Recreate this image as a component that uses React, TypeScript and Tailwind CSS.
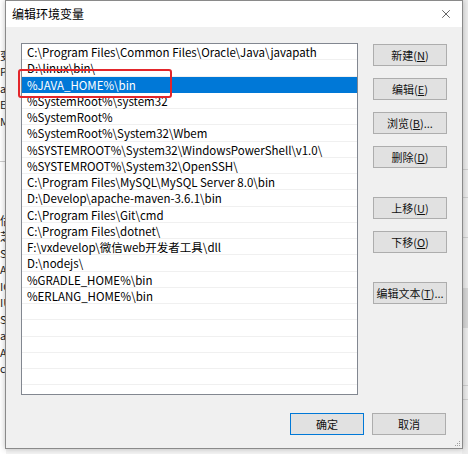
import { X } from "lucide-react";

const paths = [
  "C:\\Program Files\\Common Files\\Oracle\\Java\\javapath",
  "D:\\linux\\bin\\",
  "%JAVA_HOME%\\bin",
  "%SystemRoot%\\system32",
  "%SystemRoot%",
  "%SystemRoot%\\System32\\Wbem",
  "%SYSTEMROOT%\\System32\\WindowsPowerShell\\v1.0\\",
  "%SYSTEMROOT%\\System32\\OpenSSH\\",
  "C:\\Program Files\\MySQL\\MySQL Server 8.0\\bin",
  "D:\\Develop\\apache-maven-3.6.1\\bin",
  "C:\\Program Files\\Git\\cmd",
  "C:\\Program Files\\dotnet\\",
  "F:\\vxdevelop\\微信web开发者工具\\dll",
  "D:\\nodejs\\",
  "%GRADLE_HOME%\\bin",
  "%ERLANG_HOME%\\bin",
];

const rows = [...paths, ...Array(6).fill("")];

const sideBits = ["", "变", "Pr", "a", "E", "M", "", "", "", "", "", "估", "芝", "SF", "A", "IC", "IU", "S", "a", "A", "c"];

function Btn({ label, keyChar, tail = "", primary = false }: { label: string; keyChar?: string; tail?: string; primary?: boolean }) {
  return (
    <button
      className={`w-[74px] h-[22px] bg-[#e1e1e1] text-[11px] text-[#111] flex items-center justify-center border ${
        primary ? "border-[#0078d7]" : "border-[#adadad]"
      }`}
    >
      {label}
      {keyChar && (
        <>
          (<span className="underline">{keyChar}</span>)
        </>
      )}
      {tail}
    </button>
  );
}

export default function App() {
  return (
    <div
      className="relative w-[468px] h-[454px] overflow-hidden bg-[#f4f4f4] flex"
      style={{ fontFamily: '"Noto Sans CJK SC", "Noto Sans", sans-serif' }}
    >
      {/* background window peeking out */}
      <div className="w-[6px] h-full bg-white flex flex-col pt-[30px] text-[11px] leading-[16.5px] text-[#222] overflow-hidden whitespace-nowrap">
        {sideBits.map((t, i) => (
          <div key={i} className={`h-[16.5px] ${i === 7 ? "border-b border-[#ccc]" : ""}`}>
            {t}
          </div>
        ))}
      </div>
      <div className="flex-1" />
      <div className="w-[6px] h-full bg-[#ececec] flex flex-col">
        <div className="h-[170px] border-b border-[#cfcfcf]" />
        <div className="h-[28px] border-b border-[#cfcfcf]" />
        <div className="h-[40px] border-b border-[#cfcfcf]" />
        <div className="h-[50px]" />
        <div className="h-[40px] bg-[#d6d6d6]" />
        <div className="h-[58px] border-b border-[#cfcfcf]" />
        <div className="h-[14px] border-b border-[#cfcfcf]" />
      </div>

      {/* dialog window */}
      <div className="absolute left-[5px] top-0 w-[458px] h-[449px] border border-[#8a8a8a] bg-[#f0f0f0] flex flex-col shadow-[0_0_6px_rgba(0,0,0,0.25)]">
        <div className="h-[26px] bg-white flex items-center justify-between pl-[6px] pr-[9px] shrink-0">
          <span className="text-[12px] text-[#000]">编辑环境变量</span>
          <X size={14} strokeWidth={1.2} className="text-[#222]" />
        </div>
        <div className="relative flex-1 flex flex-col px-[15px] pt-[16px]">
          <div className="flex gap-[15px]">
            <div className="relative w-[341px] h-[352px] bg-white border border-[#828790] overflow-hidden">
              {rows.map((p, i) => (
                <div
                  key={i}
                  className={`h-[16.25px] px-[5px] text-[11.5px] leading-[16px] whitespace-nowrap border-b ${
                    i === 2 ? "bg-[#0078d7] text-white border-[#0078d7]" : "text-[#000] border-[#f0f0f0]"
                  }`}
                >
                  {p}
                </div>
              ))}
            </div>
            <div className="flex flex-col pt-[1px]">
              <div className="flex flex-col gap-[12px]">
                <Btn label="新建" keyChar="N" />
                <Btn label="编辑" keyChar="E" />
                <Btn label="浏览" keyChar="B" tail="..." />
                <Btn label="删除" keyChar="D" />
              </div>
              <div className="flex flex-col gap-[12px] mt-[29px]">
                <Btn label="上移" keyChar="U" />
                <Btn label="下移" keyChar="O" />
              </div>
              <div className="mt-[29px]">
                <Btn label="编辑文本" keyChar="T" tail="..." />
              </div>
            </div>
          </div>
          <div className="flex justify-end gap-[8px] mt-[18px] pr-[1px]">
            <Btn label="确定" primary />
            <Btn label="取消" />
          </div>
          {/* red annotation */}
          <div className="absolute left-[12px] top-[42px] w-[154px] h-[29px] border-2 border-[#e3262b] rounded-[3px]" />
          <div className="absolute right-[2px] bottom-[2px] grid grid-cols-3 gap-[1px]">
            {[0, 0, 1, 0, 1, 1, 1, 1, 1].map((v, i) => (
              <div key={i} className={`w-[1px] h-[1px] ${v ? "bg-[#a0a0a0]" : ""}`} />
            ))}
          </div>
        </div>
      </div>
    </div>
  );
}
